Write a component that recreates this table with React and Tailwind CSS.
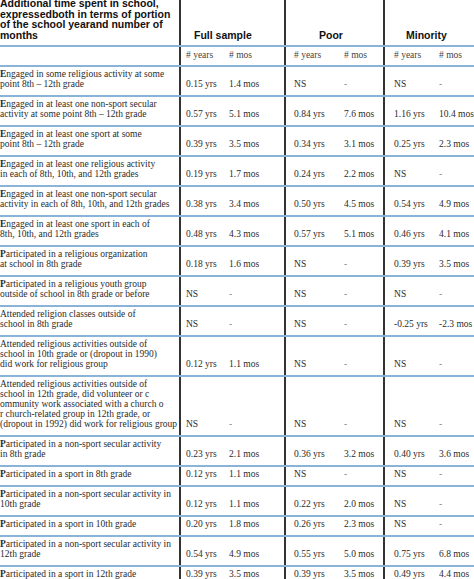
import React from "react";

// rows: label lines, then [full yrs, full mos, poor yrs, poor mos, min yrs, min mos]
const rows = [
  [["Engaged in some religious activity at some", "point 8th – 12th grade"], ["0.15 yrs", "1.4 mos", "NS", "-", "NS", "-"]],
  [["Engaged in at least one non-sport secular", "activity at some point 8th – 12th grade"], ["0.57 yrs", "5.1 mos", "0.84 yrs", "7.6 mos", "1.16 yrs", "10.4 mos"]],
  [["Engaged in at least one sport at some", "point 8th – 12th grade"], ["0.39 yrs", "3.5 mos", "0.34 yrs", "3.1 mos", "0.25 yrs", "2.3 mos"]],
  [["Engaged in at least one religious activity", "in each of 8th, 10th, and 12th grades"], ["0.19 yrs", "1.7 mos", "0.24 yrs", "2.2 mos", "NS", "-"]],
  [["Engaged in at least one non-sport secular", "activity in each of 8th, 10th, and 12th grades"], ["0.38 yrs", "3.4 mos", "0.50 yrs", "4.5 mos", "0.54 yrs", "4.9 mos"]],
  [["Engaged in at least one sport in each of", "8th, 10th, and 12th grades"], ["0.48 yrs", "4.3 mos", "0.57 yrs", "5.1 mos", "0.46 yrs", "4.1 mos"]],
  [["Participated in a religious organization", "at school in 8th grade"], ["0.18 yrs", "1.6 mos", "NS", "-", "0.39 yrs", "3.5 mos"]],
  [["Participated in a religious youth group", "outside of school in 8th grade or before"], ["NS", "-", "NS", "-", "NS", "-"]],
  [["Attended religion classes outside of", "school in 8th grade"], ["NS", "-", "NS", "-", "-0.25 yrs", "-2.3 mos"]],
  [["Attended religious activities outside of", "school in 10th grade or (dropout in 1990)", "did work for religious group"], ["0.12 yrs", "1.1 mos", "NS", "-", "NS", "-"]],
  [
    [
      "Attended religious activities outside of",
      "school in 12th grade, did volunteer or c",
      "ommunity work associated with a church o",
      "r church-related group in 12th grade, or",
      "(dropout in 1992) did work for religious group",
    ],
    ["NS", "-", "NS", "-", "NS", "-"],
  ],
  [["Participated in a non-sport secular activity", "in 8th grade"], ["0.23 yrs", "2.1 mos", "0.36 yrs", "3.2 mos", "0.40 yrs", "3.6 mos"]],
  [["Participated in a sport in 8th grade"], ["0.12 yrs", "1.1 mos", "NS", "-", "NS", "-"]],
  [["Participated in a non-sport secular activity in", "10th grade"], ["0.12 yrs", "1.1 mos", "0.22 yrs", "2.0 mos", "NS", "-"]],
  [["Participated in a sport in 10th grade"], ["0.20 yrs", "1.8 mos", "0.26 yrs", "2.3 mos", "NS", "-"]],
  [["Participated in a non-sport secular activity in", "12th grade"], ["0.54 yrs", "4.9 mos", "0.55 yrs", "5.0 mos", "0.75 yrs", "6.8 mos"]],
  [["Participated in a sport in 12th grade"], ["0.39 yrs", "3.5 mos", "0.39 yrs", "3.5 mos", "0.49 yrs", "4.4 mos"]],
];

const cellPad = [
  "pl-[5px]",
  "pl-[2px]",
  "pl-[8px] border-l-2 border-l-[#333]",
  "pl-[4px]",
  "pl-[9px] border-l-2 border-l-[#333]",
  "pl-[3px]",
];

function Label({ lines }) {
  const first = lines[0];
  const bold = first[0] === "E" || first[0] === "P";
  return lines.map((l, i) => (
    <React.Fragment key={i}>
      {i === 0 && bold ? (
        <>
          <span className="font-bold">{l[0]}</span>
          {l.slice(1)}
        </>
      ) : (
        l
      )}
      {i < lines.length - 1 && <br />}
    </React.Fragment>
  ));
}

export default function App() {
  return (
    <div className="w-[474px] h-[579px] overflow-hidden bg-white">
      <table className="table-fixed border-collapse w-[492px] -mt-[4px] font-['Liberation_Serif',serif] text-[9.5px] leading-[10px] text-[#2b2b2b]">
        <colgroup>
          <col className="w-[180px]" />
          <col className="w-[47px]" />
          <col className="w-[58px]" />
          <col className="w-[55px]" />
          <col className="w-[44px]" />
          <col className="w-[52px]" />
          <col className="w-[56px]" />
        </colgroup>
        <thead>
          <tr className="font-['Liberation_Sans',Arial,sans-serif] font-bold text-[10.5px] leading-[10.5px] text-[#111]">
            <th className="text-left align-bottom pt-[2px] pb-[5px] pl-0 border-r-2 border-r-[#333] border-b-2 border-b-[#89b4d8] whitespace-nowrap">
              Additional time spent in school,
              <br />
              expressedboth in terms of portion
              <br />
              of the school yearand number of
              <br />
              months
            </th>
            <th colSpan={2} className="text-left align-bottom pb-[5px] pl-[13px] border-b-2 border-b-[#89b4d8] whitespace-nowrap">
              Full sample
            </th>
            <th colSpan={2} className="text-left align-bottom pb-[5px] pl-[33px] border-l-2 border-l-[#333] border-b-2 border-b-[#89b4d8]">
              Poor
            </th>
            <th colSpan={2} className="text-left align-bottom pb-[5px] pl-[21px] border-l-2 border-l-[#333] border-b-2 border-b-[#89b4d8]">
              Minority
            </th>
          </tr>
        </thead>
        <tbody>
          <tr className="text-[#444]">
            <td className="pt-[3px] pb-[5px] border-r-2 border-r-[#333] border-b-2 border-b-[#89b4d8]"></td>
            {["# years", "# mos", "# years", "# mos", "# years", "# mos"].map((h, i) => (
              <td key={i} className={`pt-[3px] pb-[5px] whitespace-nowrap border-b-2 border-b-[#89b4d8] ${cellPad[i]}`}>
                {h}
              </td>
            ))}
          </tr>
          {rows.map(([label, vals], r) => (
            <tr key={r}>
              <td className="align-top pt-[2px] pb-[6px] pl-0 whitespace-nowrap border-r-2 border-r-[#333] border-b-2 border-b-[#89b4d8]">
                <Label lines={label} />
              </td>
              {vals.map((v, i) => (
                <td
                  key={i}
                  className={`align-bottom pb-[6px] whitespace-nowrap border-b-2 border-b-[#89b4d8] ${cellPad[i]} ${v === "-" ? "text-[#888]" : ""}`}
                >
                  {v}
                </td>
              ))}
            </tr>
          ))}
        </tbody>
      </table>
    </div>
  );
}
